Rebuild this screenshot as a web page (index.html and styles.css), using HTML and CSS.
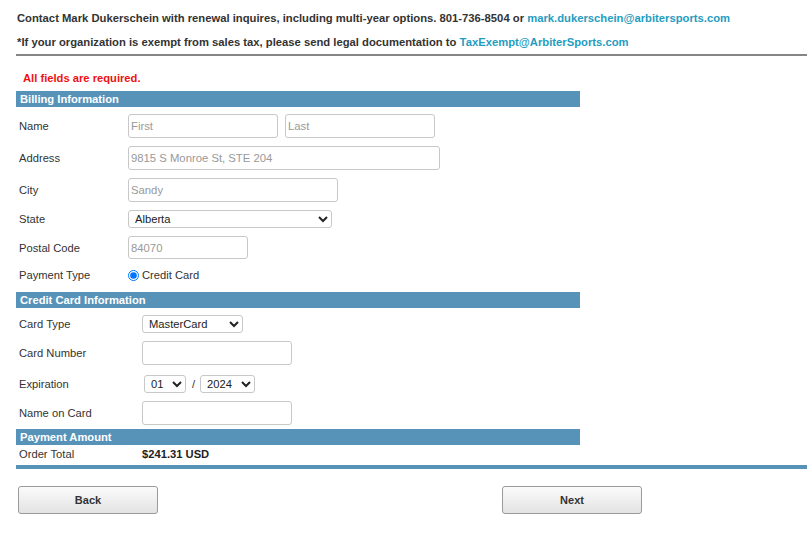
FILE: index.html
```html
<!DOCTYPE html>
<html>
<head>
<meta charset="utf-8">
<link rel="stylesheet" href="styles.css">
</head>
<body>
<div class="page">
  <div class="notice">
    <p class="note">Contact Mark Dukerschein with renewal inquires, including multi-year options. 801-736-8504 or <a href="#">mark.dukerschein@arbitersports.com</a></p>
    <p class="note">*If your organization is exempt from sales tax, please send legal documentation to <a href="#">TaxExempt@ArbiterSports.com</a></p>
  </div>
  <hr class="rule">
  <div class="required">All fields are required.</div>

  <div class="form">
    <div class="bar">Billing Information</div>
    <div class="rows billing">
      <div class="row">
        <label class="lbl">Name</label>
        <div class="ctrl">
          <input class="inp w150" placeholder="First">
          <input class="inp w150 ml8" placeholder="Last">
        </div>
      </div>
      <div class="row">
        <label class="lbl">Address</label>
        <div class="ctrl"><input class="inp w312" placeholder="9815 S Monroe St, STE 204"></div>
      </div>
      <div class="row">
        <label class="lbl">City</label>
        <div class="ctrl"><input class="inp w210" placeholder="Sandy"></div>
      </div>
      <div class="row">
        <label class="lbl">State</label>
        <div class="ctrl">
          <select class="sel w204"><option>Alberta</option></select>
        </div>
      </div>
      <div class="row">
        <label class="lbl">Postal Code</label>
        <div class="ctrl"><input class="inp w120 h23" placeholder="84070"></div>
      </div>
      <div class="row pay">
        <label class="lbl">Payment Type</label>
        <div class="ctrl radio-ctrl">
          <input type="radio" class="radio" checked id="cc"><label for="cc" class="radio-lbl">Credit Card</label>
        </div>
      </div>
    </div>

    <div class="bar">Credit Card Information</div>
    <div class="rows card">
      <div class="row">
        <label class="lbl">Card Type</label>
        <div class="ctrl"><select class="sel w101"><option>MasterCard</option></select></div>
      </div>
      <div class="row">
        <label class="lbl">Card Number</label>
        <div class="ctrl"><input class="inp w150"></div>
      </div>
      <div class="row exp">
        <label class="lbl">Expiration</label>
        <div class="ctrl">
          <select class="sel w42 ml2"><option>01</option></select>
          <span class="slash">/</span>
          <select class="sel w55"><option>2024</option></select>
        </div>
      </div>
      <div class="row">
        <label class="lbl">Name on Card</label>
        <div class="ctrl"><input class="inp w150"></div>
      </div>
    </div>

    <div class="bar">Payment Amount</div>
    <div class="row total">
      <span class="lbl">Order Total</span>
      <span class="amount">$241.31 USD</span>
    </div>
  </div>
  <div class="bottom-bar"></div>
  <div class="buttons">
    <button class="btn">Back</button>
    <button class="btn next">Next</button>
  </div>
</div>
</body>
</html>
```
FILE: styles.css
```css
html, body {
  margin: 0;
  padding: 0;
  background: #fff;
}
body {
  font-family: "Liberation Sans", Arial, sans-serif;
  font-size: 11.2px;
  color: #333;
}
.page {
  padding-left: 16px;
  padding-top: 11px;
}
.notice {
  padding-left: 1px;
}
.note {
  margin: 0;
  font-weight: bold;
  font-size: 11.25px;
  line-height: 14px;
  color: #333;
}
.note + .note {
  margin-top: 10px;
}
.note a {
  color: #1f9dc1;
  text-decoration: none;
}
.rule {
  margin: 5px 0 0 0;
  border: 0;
  height: 2px;
  background: #858585;
}
.required {
  color: #f01010;
  font-weight: bold;
  padding-left: 7px;
  margin-top: 15px;
  line-height: 14px;
}
.form {
  width: 564px;
  margin-top: 6px;
}
.bar {
  background: #5793b9;
  color: #fff;
  font-weight: bold;
  height: 16px;
  line-height: 16px;
  padding-left: 4px;
}
.rows {
  display: flex;
  flex-direction: column;
  gap: 8px;
  padding-left: 3px;
}
.billing {
  padding-top: 7px;
  padding-bottom: 10px;
}
.card {
  padding-top: 7px;
  padding-bottom: 4px;
}
.row {
  display: flex;
  align-items: center;
}
.billing .lbl { width: 109px; }
.card .lbl { width: 123px; }
.lbl {
  flex: none;
  color: #333;
}
.ctrl {
  display: flex;
  align-items: center;
}
.inp {
  box-sizing: border-box;
  height: 24px;
  border: 1px solid #c8c8c8;
  border-radius: 3px;
  padding: 0 2px;
  font-family: "Liberation Sans", Arial, sans-serif;
  font-size: 11.3px;
  color: #555;
  background: #fff;
  margin: 0;
}
.inp::placeholder {
  color: #999;
}
.sel {
  box-sizing: border-box;
  height: 18px;
  border: 1px solid #c8c8c8;
  border-radius: 3px;
  font-family: "Liberation Sans", Arial, sans-serif;
  font-size: 11.2px;
  color: #222;
  background: #fff;
  padding: 0 2px;
  margin: 0;
}
.h23 { height: 23px; }
.w150 { width: 150px; }
.w312 { width: 312px; }
.w210 { width: 210px; }
.w120 { width: 120px; }
.w204 { width: 204px; }
.w101 { width: 101px; }
.w42 { width: 42px; }
.w55 { width: 55px; }
.ml8 { margin-left: 7px; }
.ml2 { margin-left: 2px; }
.slash {
  margin: 0 5px 0 6px;
  color: #333;
}
.exp {
  margin-top: 2px;
}
.pay {
  margin-top: 1px;
}
.radio-ctrl {
  height: 14px;
}
.radio {
  margin: 0 3px 0 0;
  width: 11px;
  height: 11px;
}
.radio-lbl {
  color: #333;
}
.total {
  padding-left: 3px;
  height: 15px;
  margin-top: 1px;
}
.total .lbl { width: 123px; }
.amount {
  font-weight: bold;
  color: #222;
}
.bottom-bar {
  height: 4px;
  background: #5793b9;
  margin-top: 4px;
}
.buttons {
  display: flex;
  padding-left: 2px;
  margin-top: 17px;
}
.btn {
  box-sizing: border-box;
  width: 140px;
  height: 28px;
  border: 1px solid #9a9a9a;
  border-radius: 3px;
  background: linear-gradient(#fbfbfb, #e3e3e3);
  font-family: "Liberation Sans", Arial, sans-serif;
  font-size: 11px;
  font-weight: bold;
  color: #333;
  margin: 0;
  padding: 0;
}
.next {
  margin-left: 344px;
}
```
